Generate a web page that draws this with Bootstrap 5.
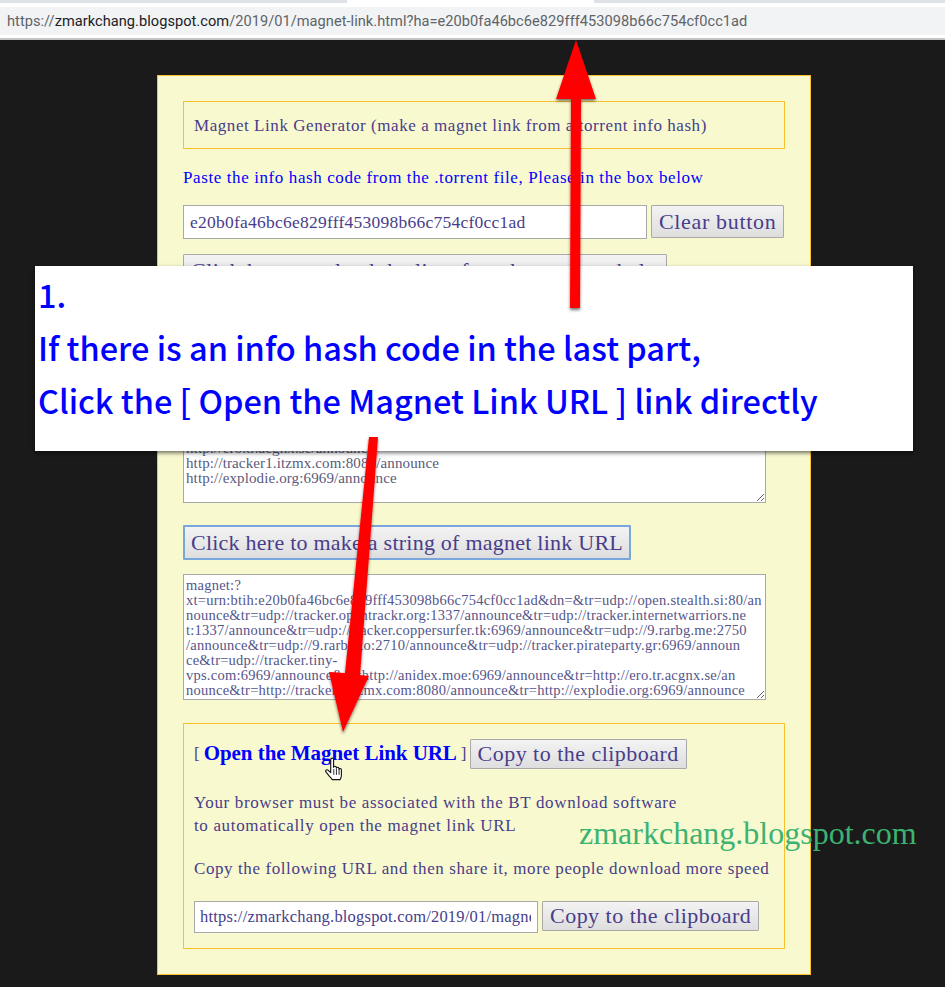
<!DOCTYPE html>
<html lang="en">
<head>
<meta charset="utf-8">
<title>Magnet Link Generator</title>
<link href="https://cdn.jsdelivr.net/npm/bootstrap@5.3.0/dist/css/bootstrap.min.css" rel="stylesheet">
<style>
html,body{margin:0;background:#1a1a1a;}
.shot{position:relative;width:945px;height:987px;overflow:hidden;background:#1a1a1a;font-family:"Liberation Serif",serif;color:#483d8b;}
.tabstrip{height:7px;background:#fff;}
.tabs-row{height:3px;background:#dee1e6;}
.tabs-gap{width:247px;margin-left:347px;height:3px;background:#fff;}
.addr{height:28px;background:#f1f3f4;padding-left:7px;font:14.6px/28px Roboto,sans-serif;letter-spacing:.04px;color:#5f6368;white-space:nowrap;}
.addr b{font-weight:400;color:#202124;}
.addr-foot{height:5px;background:#fff;border-bottom:2px solid #c4c4c4;}
.sheet{width:654px;height:900px;margin:35px 0 0 157px;padding:25px;background:#f9f9cf;border:1px solid #fbc02d;}
.framebox{border:1px solid #fbc02d;width:602px;}
.headbox{height:48px;padding:0 10px;font-size:17px;line-height:47px;letter-spacing:.56px;}
.hint{color:#00f;font-size:17px;letter-spacing:.6px;line-height:20px;margin:19px 0 17px;}
.fld,.txa{border:1px solid #a9a9a9;background:#fff;color:#483d8b;font-family:"Liberation Serif",serif;border-radius:0;outline:0;padding:0;}
.fld{height:34px;}
.fld-hash{width:464px;padding:0 6px;font-size:17.5px;letter-spacing:.24px;}
.fld-url{width:344px;height:32px;padding:0 6px 0 5px;font-size:16.5px;letter-spacing:.2px;}
.gbtn{border:1px solid #a9a9a9;border-radius:1px;background:linear-gradient(#f3f3f3,#dedede);color:#483d8b;font-family:"Liberation Serif",serif;font-size:22px;line-height:1;padding:0 7px;height:30px;white-space:nowrap;letter-spacing:.48px;}
.gbtn-clear{height:33px;letter-spacing:.66px;}
.gbtn-blue{border:2px solid #7ba6dc;width:448px;height:35px;display:block;margin-top:22px;letter-spacing:.24px;text-align:left;padding-left:6px;}
.gbtn-show{width:484px;height:33px;display:block;margin-top:15px;text-align:left;}
.txa{display:block;width:583px;font-size:15px;line-height:15px;padding:3px 2px 0;color:#5a5a7c;}
.txa-list{height:201px;margin-top:15px;letter-spacing:.12px;}
.txa-mag{height:126px;margin-top:14px;letter-spacing:.24px;color:#55558a;overflow:hidden;font-size:14.5px;padding-top:3px;}
.openbox{height:226px;margin-top:23px;padding:0 10px;}
.openline{height:30px;margin-top:15px;font-size:17px;}
.openlink{color:#00f;font-weight:700;font-size:21px;text-decoration:none;letter-spacing:-.05px;margin:0 4px;}
.openline .gbtn{margin-left:3px;}
.note{font-size:17px;line-height:23px;letter-spacing:.65px;margin:0;white-space:nowrap;}
.note-a{margin-top:22px;}
.note-b{margin-top:20px;letter-spacing:.59px;}
.urlline{margin-top:21px;}
.overlay{position:absolute;left:35px;top:266px;width:878px;height:185px;background:#fff;box-shadow:0 2px 4px rgba(0,0,0,.55);padding:1px 0 0 3px;color:#00f;font:500 32.5px/53px "Noto Sans CJK TC","Noto Sans",sans-serif;white-space:nowrap;}
.arrows{position:absolute;left:0;top:0;}
.stamp{position:absolute;left:579px;top:813px;color:#3cb371;font-size:32px;line-height:40px;white-space:nowrap;}
</style>
</head>
<body>
<div class="shot">
  <div class="tabstrip"><div class="tabs-row"><div class="tabs-gap"></div></div></div>
  <div class="addr">https://<b>zmarkchang.blogspot.com</b>/2019/01/magnet-link.html?ha=e20b0fa46bc6e829fff453098b66c754cf0cc1ad</div>
  <div class="addr-foot"></div>

  <div class="sheet">
    <div class="framebox headbox">Magnet Link Generator (make a magnet link from a torrent info hash)</div>
    <p class="hint">Paste the info hash code from the .torrent file, Please in the box below</p>
    <div class="d-flex gap-1 align-items-start">
      <input class="fld fld-hash" type="text" value="e20b0fa46bc6e829fff453098b66c754cf0cc1ad">
      <button class="gbtn gbtn-clear" type="button">Clear button</button>
    </div>
    <button class="gbtn gbtn-show" type="button">Click here to reload the list of tracker servers below</button>
    <textarea class="txa txa-list" spellcheck="false">udp://open.stealth.si:80/announce
udp://tracker.opentrackr.org:1337/announce
udp://tracker.internetwarriors.net:1337/announce
udp://tracker.coppersurfer.tk:6969/announce
udp://9.rarbg.me:2750/announce
udp://9.rarbg.to:2710/announce
udp://tracker.pirateparty.gr:6969/announce
udp://tracker.tiny-vps.com:6969/announce
http://anidex.moe:6969/announce
http://ero.tr.acgnx.se/announce
http://tracker1.itzmx.com:8080/announce
http://explodie.org:6969/announce</textarea>
    <button class="gbtn gbtn-blue" type="button">Click here to make a string of magnet link URL</button>
    <textarea class="txa txa-mag" wrap="off" spellcheck="false">magnet:?
xt=urn:btih:e20b0fa46bc6e829fff453098b66c754cf0cc1ad&amp;dn=&amp;tr=udp://open.stealth.si:80/an
nounce&amp;tr=udp://tracker.opentrackr.org:1337/announce&amp;tr=udp://tracker.internetwarriors.ne
t:1337/announce&amp;tr=udp://tracker.coppersurfer.tk:6969/announce&amp;tr=udp://9.rarbg.me:2750
/announce&amp;tr=udp://9.rarbg.to:2710/announce&amp;tr=udp://tracker.pirateparty.gr:6969/announ
ce&amp;tr=udp://tracker.tiny-
vps.com:6969/announce&amp;tr=http://anidex.moe:6969/announce&amp;tr=http://ero.tr.acgnx.se/an
nounce&amp;tr=http://tracker1.itzmx.com:8080/announce&amp;tr=http://explodie.org:6969/announce</textarea>
    <div class="framebox openbox">
      <div class="openline d-flex align-items-center">
        <span>[</span><a class="openlink" href="#">Open the Magnet Link URL</a><span>]</span>
        <button class="gbtn" type="button">Copy to the clipboard</button>
      </div>
      <p class="note note-a">Your browser must be associated with the BT download software<br>to automatically open the magnet link URL</p>
      <p class="note note-b">Copy the following URL and then share it, more people download more speed</p>
      <div class="urlline d-flex gap-1 align-items-start">
        <input class="fld fld-url" type="text" value="https://zmarkchang.blogspot.com/2019/01/magnet-link.html?ha=e20b0fa46bc6e829fff453098b66c754cf0cc1ad">
        <button class="gbtn" type="button">Copy to the clipboard</button>
      </div>
    </div>
  </div>

  <div class="overlay">1.<br>If there is an info hash code in the last part,<br>Click the [ Open the Magnet Link URL ] link directly</div>
  <div class="stamp">zmarkchang.blogspot.com</div>

  <svg class="arrows" width="945" height="987" viewBox="0 0 945 987" xmlns="http://www.w3.org/2000/svg">
    <defs><filter id="sh" x="-40%" y="-10%" width="180%" height="120%"><feDropShadow dx="0" dy="2" stdDeviation="1.6" flood-color="#000" flood-opacity=".55"/></filter></defs>
    <g fill="#f00" filter="url(#sh)">
      <polygon points="576,40 596,99 581,99 580,308 570,308 571,99 556,99"/>
      <polygon points="369,437 378,437 360,675 369,676 343,732 329,672 345,673"/>
    </g>
    <g transform="translate(325,757) scale(1.1)">
      <path d="M5.2 2.2c0-1.6 2.6-1.6 2.6 0v7.2c0-1.3 2.5-1.3 2.5.2v.6c0-1.3 2.4-1.2 2.4.3v.8c0-1.2 2.2-1 2.2.4v5.4c0 1.6-.8 2.5-1.3 3.5H6.6c-1-1.7-2.2-2.6-3.6-4.4L.8 13.6c-.8-1.5 1-2.6 2.2-1.5l2.2 2.2z" fill="#fff" stroke="#111" stroke-width="1" stroke-linejoin="round"/>
      <path d="M8 11v5.2M10.4 11v5.2M12.8 11.5v4.7" stroke="#111" stroke-width=".8" fill="none"/>
    </g>
  </svg>
</div>
<script src="https://cdn.jsdelivr.net/npm/bootstrap@5.3.0/dist/js/bootstrap.bundle.min.js"></script>
</body>
</html>
